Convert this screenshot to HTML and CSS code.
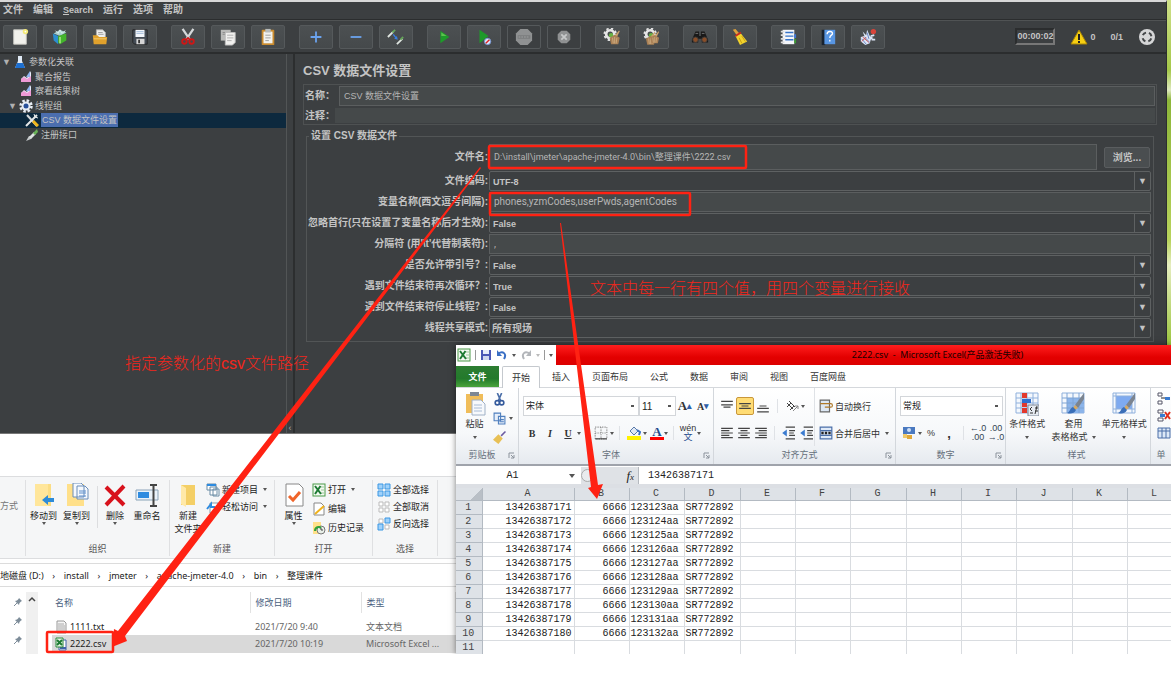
FILE: index.html
```html
<!DOCTYPE html>
<html lang="zh-CN">
<head>
    <meta charset="UTF-8">
    <meta name="viewport" content="width=device-width, initial-scale=1.0">
    <title>JMeter CSV 数据文件设置</title>
    <link rel="stylesheet" href="styles.css">
</head>
<body>
    <!-- shared symbols -->
    <svg width="0" height="0" class="symbols">
        <symbol id="chart" viewBox="0 0 14 14"><path d="M2 12V9l3-3 3 2 4-7v11z" fill="#e8eefc"/><path d="M7 7l4-6v6z" fill="#8fb3ee"/><path d="M2 12V9l3-2 3 2 4-3v6z" fill="#ef9ad6"/></symbol>
        <symbol id="left-lines" viewBox="0 0 12 12"><path d="M1 2h10M1 6h10M1 10h10M1 4h7M1 8h7" stroke="#444" stroke-width="1"/></symbol>
        <symbol id="launcher" viewBox="0 0 7 7"><path d="M1 6V1h5M3 3l3 3M6 3v3H3" stroke="#8b929b" fill="none"/></symbol>
        <symbol id="pin" viewBox="0 0 10 10"><path d="M6 1l3 3-1 .5-1.500 1.500-.5 2L2 4l2-.5L5.500 2z" fill="#7d8c99"/><path d="M4 6L1 9" stroke="#7d8c99"/></symbol>
        <symbol id="xls" viewBox="0 0 14 14"><rect x="1" y="1" width="12" height="12" fill="#f4faf2" stroke="#4b9a49"/><path d="M9 4h3M9 7h3M9 10h3" stroke="#9cc79b"/><path d="M3 3l6 8M8.500 3L3 11" stroke="#1d7a33" stroke-width="2"/></symbol>
        <symbol id="brush" viewBox="0 0 24 24"><path d="M23 1l-9 12 3 3 6-9z" fill="#7b8490"/><path d="M14 13l3 3-3 2-2-2z" fill="#d9a95e"/><path d="M12 15l3 3c-2 4-6 4-9 3 3-1 3-5 6-6z" fill="#3a6fb8"/></symbol>
        <symbol id="broom" viewBox="0 0 20 20"><path d="M10 8l6-7 1 1-4 8z" fill="#c9a26b"/><path d="M3 11l7-4 7 4-2 9H5z" fill="#a98055"/><path d="M7 11l1 8M10 10v9M13 11l-1 8" stroke="#d6b88d"/></symbol>
        <symbol id="cog" viewBox="0 0 20 20"><circle cx="8" cy="7" r="4.500" fill="none" stroke="#e6e6e6" stroke-width="3"/><circle cx="8" cy="7" r="6.500" fill="none" stroke="#e6e6e6" stroke-width="2" stroke-dasharray="2.600 2.500"/><circle cx="9" cy="8" r="2.500" fill="#69b343"/></symbol>
    </svg>

    <div class="desktop">
        <div class="jmeter">
            <nav class="menubar">
                <a href="#">文件</a>
                <a href="#">编辑</a>
                <a href="#" class="menu-search"><u>S</u>earch</a>
                <a href="#">运行</a>
                <a href="#">选项</a>
                <a href="#">帮助</a>
            </nav>

            <div class="toolbar">
                <div class="tool-group">
                    <button class="tool" aria-label="新建"><svg viewBox="0 0 20 20"><path d="M3 2h12l2 3v13H3z" fill="#f1f1ec" stroke="#c9c9c4"/><circle cx="16" cy="4" r="3" fill="#f4ea7a"/><circle cx="16" cy="4" r="1" fill="#fff"/></svg></button>
                    <button class="tool" aria-label="模板"><svg viewBox="0 0 20 20"><path d="M3 6l7-4 7 3-7 4z" fill="#a7d0cf"/><path d="M2 6l6 3v9l-5-4z" fill="#2b8fd0"/><path d="M8 9l9-3v8l-7 4-2-2z" fill="#43b42c"/><path d="M5 3l3 3 2-4 2 4 4-3" stroke="#e1f0ef" fill="none"/><path d="M10 10v7" stroke="#9be07c" stroke-width="2"/></svg></button>
                    <button class="tool" aria-label="打开"><svg viewBox="0 0 20 20"><path d="M6 2h7l3 3v8H6z" fill="#eee" stroke="#aaa"/><path d="M8 5h5M8 7h6" stroke="#999"/><path d="M2 8h5l2 2h9l-1 8H3z" fill="#e0a12c"/><path d="M3 12h14" stroke="#f6cf73"/></svg></button>
                    <button class="tool" aria-label="保存"><svg viewBox="0 0 20 20"><path d="M2 2h16v16H4l-2-2z" fill="#444c55" stroke="#222"/><path d="M5 2h10v8H5z" fill="#f2f6fb"/><path d="M6 4h8M6 6h8" stroke="#9fb9d8"/><path d="M6 12h9v6H6z" fill="#d5d5d5"/><path d="M8 13h2v4H8z" fill="#333"/></svg></button>
                </div>
                <div class="tool-group">
                    <button class="tool" aria-label="剪切"><svg viewBox="0 0 20 20"><path d="M4 1l8 12M16 1L8 13" stroke="#d5d8da" stroke-width="2.500"/><ellipse cx="6" cy="15" rx="2.500" ry="2.500" fill="none" stroke="#cf1616" stroke-width="2"/><ellipse cx="14" cy="15" rx="2.500" ry="2.500" fill="none" stroke="#cf1616" stroke-width="2"/><path d="M8 13l2-2 2 2" stroke="#cf1616" stroke-width="2" fill="none"/></svg></button>
                    <button class="tool" aria-label="复制"><svg viewBox="0 0 20 20"><path d="M2 2h11v12H2z" fill="#b9bab8"/><path d="M4 5h6M4 7h6" stroke="#888"/><path d="M7 5h11v11l-3 3H7z" fill="#f0f0ee" stroke="#bbb"/><path d="M9 8h7M9 11h7M9 14h5" stroke="#aaa"/></svg></button>
                    <button class="tool" aria-label="粘贴"><svg viewBox="0 0 20 20"><rect x="3" y="2" width="14" height="17" rx="1" fill="#c98b2e"/><path d="M5 4h10v13H5z" fill="#f2f2ee"/><path d="M7 1h6v4H7z" fill="#b7bbbb"/><path d="M7 8h6M7 11h6M7 14h4" stroke="#999"/></svg></button>
                </div>
                <div class="tool-group">
                    <button class="tool" aria-label="展开"><svg viewBox="0 0 20 20"><path d="M10 4v12M4 10h12" stroke="#6ba3ee" stroke-width="2"/></svg></button>
                    <button class="tool" aria-label="折叠"><svg viewBox="0 0 20 20"><path d="M4 10h12" stroke="#6ba3ee" stroke-width="2"/></svg></button>
                    <button class="tool" aria-label="切换"><svg viewBox="0 0 20 20"><path d="M1 10l6-6M11 18l6-6" stroke="#dfe5e0" stroke-width="2"/><path d="M6 5l3-3M15 13l3-3" stroke="#65a35a" stroke-width="2"/><path d="M7 7l3 4" stroke="#3a7ee0" stroke-width="1.500"/><path d="M12 13l-4-1 3-3z" fill="#3a7ee0"/></svg></button>
                </div>
                <div class="tool-group">
                    <button class="tool" aria-label="启动"><svg viewBox="0 0 20 20"><path d="M6 3l10 7-10 7z" fill="#1e9a2a"/><path d="M7 5l6 4-6 0z" fill="#5cc24e"/></svg></button>
                    <button class="tool" aria-label="不停顿启动"><svg viewBox="0 0 20 20"><path d="M5 2l10 7-10 8z" fill="#1e9a2a"/><circle cx="14" cy="15" r="3.500" fill="#dfe9fa" stroke="#6c8fd0"/><path d="M12 17l4-4" stroke="#d22" stroke-width="1.500"/></svg></button>
                    <button class="tool off" aria-label="停止"><svg viewBox="0 0 20 20"><path d="M6 1h8l5 5v8l-5 5H6l-5-5V6z" fill="#8f9192"/><path d="M3 8h14v4H3z" fill="#7b7d7e"/><path d="M4 10h12" stroke="#a3a5a6" stroke-dasharray="2 1"/></svg></button>
                    <button class="tool off" aria-label="关闭"><svg viewBox="0 0 20 20"><path d="M7 3h6l4 4v6l-4 4H7l-4-4V7z" fill="#8f9192"/><path d="M7 7l6 6M13 7l-6 6" stroke="#c6c8c9" stroke-width="2"/></svg></button>
                </div>
                <div class="tool-group">
                    <button class="tool" aria-label="清除"><svg viewBox="0 0 20 20"><use href="#cog"/><use href="#broom" x="5" y="1" width="16" height="18"/></svg></button>
                    <button class="tool" aria-label="清除全部"><svg viewBox="0 0 20 20"><use href="#cog"/><use href="#broom" x="1" y="3" width="15" height="16"/><use href="#broom" x="6" y="1" width="14" height="18"/></svg></button>
                </div>
                <div class="tool-group">
                    <button class="tool" aria-label="查找"><svg viewBox="0 0 20 20"><path d="M5 4h4v5h2V4h4l4 9v3h-7v-4H8v4H1v-3z" fill="#191919"/><circle cx="5" cy="13" r="3" fill="#8a4e28" stroke="#3a3a3a"/><circle cx="15" cy="13" r="3" fill="#8a4e28" stroke="#3a3a3a"/><path d="M5 6h3M12 6h3" stroke="#777"/></svg></button>
                    <button class="tool" aria-label="重置查找"><svg viewBox="0 0 20 20"><path d="M2 2l3-1 5 6-3 2z" fill="#dda13c"/><path d="M5 9l6-3 7 9-8 4z" fill="#f2d32c"/><path d="M5 9l6-4" stroke="#cc2b1d" stroke-width="2"/><path d="M9 11l3 6M12 9l4 6" stroke="#c49a12"/></svg></button>
                </div>
                <div class="tool-group">
                    <button class="tool" aria-label="函数助手"><svg viewBox="0 0 20 20"><path d="M4 2h13v16H4z" fill="#f4f6fa"/><path d="M7 5h9M7 9h9M7 13h9" stroke="#3774c9" stroke-width="1.500"/><path d="M2 4h4M2 8h4M2 12h4M2 16h4" stroke="#ddd" stroke-width="2"/><path d="M18 7v4" stroke="#3b79e0" stroke-width="2"/><path d="M18 12v5" stroke="#3a9c32" stroke-width="2"/></svg></button>
                    <button class="tool" aria-label="帮助"><svg viewBox="0 0 20 20"><path d="M3 2h4v17H3z" fill="#18222f"/><path d="M6 2h12v16H6z" fill="#5795e2"/><path d="M9 7c0-4 6-4 6-1 0 2-3 2-3 5M12 13v2" stroke="#fff" stroke-width="1.500" fill="none"/></svg></button>
                    <button class="tool" aria-label="火箭"><svg viewBox="0 0 20 20"><path d="M4 4l4 4 1-6 3 7 4 2-3 2-1 4-5 2-5-4v-5l4-1z" fill="#dbe4f5"/><path d="M3 12l5 6M6 10l6 6M9 5l2 7" stroke="#5b7cc0"/><path d="M4 10l7 6M3 15l5-5" stroke="#d0504a"/><circle cx="16" cy="4" r="3" fill="#d8443a"/><path d="M13 9l4-1M14 13h4" stroke="#dbe4f5" stroke-width="2"/></svg></button>
                </div>
                <div class="status">
                    <span class="timer">00:00:02</span>
                    <span class="warnings"><svg width="18" height="16" viewBox="0 0 18 16"><path d="M9 1l8 14H1z" fill="#f7cf12" stroke="#a98606"/><path d="M9 5v6M9 12v2" stroke="#222" stroke-width="2"/></svg>0</span>
                    <span>0/1</span>
                    <svg width="18" height="18" viewBox="0 0 18 18"><circle cx="9" cy="9" r="8" fill="#d5d6d7"/><circle cx="9" cy="9" r="4.500" fill="none" stroke="#434648" stroke-width="2" stroke-dasharray="4 3.070" stroke-dashoffset="-1.500"/></svg>
                </div>
            </div>

            <div class="jmeter-body">
                <div class="tree-pane">
                    <ul class="tree">
                        <li class="root"><span class="twisty">▼</span><svg viewBox="0 0 14 14"><path d="M5 1h4v5l3 7H2l3-7z" fill="#dfe9f5"/><path d="M4 8h6l2 5H2z" fill="#1d6fd0"/></svg><span>参数化关联</span></li>
                        <li class="leaf"><svg><use href="#chart"/></svg><span>聚合报告</span></li>
                        <li class="leaf"><svg><use href="#chart"/></svg><span>察看结果树</span></li>
                        <li class="branch"><span class="twisty">▼</span><svg viewBox="0 0 14 14"><circle cx="7" cy="7" r="5.500" fill="none" stroke="#e8edf5" stroke-width="2.500" stroke-dasharray="2.500 1.800"/><circle cx="7" cy="7" r="4.500" fill="#e8edf5"/><circle cx="7" cy="7" r="2.500" fill="#28509b"/></svg><span>线程组</span></li>
                        <li class="item selected"><svg viewBox="0 0 14 14"><path d="M2 2l10 11" stroke="#d9dcde" stroke-width="2"/><path d="M8 8l5 5" stroke="#f0b61c" stroke-width="3"/><path d="M12 2L1 13" stroke="#e6e8e9" stroke-width="2"/><path d="M9 1l1 3 3 1" stroke="#e6e8e9" fill="none"/></svg><span>CSV 数据文件设置</span></li>
                        <li class="item"><svg viewBox="0 0 14 14"><path d="M1 13l3-5 3 1-1 2z" fill="#c5c9cb"/><path d="M4 9l5-5 2 2-5 5z" fill="#dde2e0"/><path d="M8 5l4-4 1 3-3 3z" fill="#69b257"/></svg><span>注册接口</span></li>
                    </ul>
                </div>
                <div class="divider">‹</div>
                <form class="config">
                    <h1>CSV 数据文件设置</h1>
                    <div class="name-box">
                        <div class="name-row">
                            <label for="name">名称：</label>
                            <input type="text" id="name" value="CSV 数据文件设置">
                        </div>
                        <div class="comment-row">
                            <label for="comment">注释：</label>
                            <input type="text" id="comment">
                        </div>
                    </div>
                    <fieldset>
                        <legend>设置 CSV 数据文件</legend>
                        <div class="field file-field">
                            <label for="filename">文件名:</label>
                            <input type="text" id="filename" value="D:\install\jmeter\apache-jmeter-4.0\bin\整理课件\2222.csv">
                            <button type="button" class="browse">浏览...</button>
                        </div>
                        <div class="field">
                            <label for="encoding">文件编码:</label>
                            <div class="combo"><select id="encoding"><option>UTF-8</option></select></div>
                        </div>
                        <div class="field">
                            <label for="variables">变量名称(西文逗号间隔):</label>
                            <input type="text" id="variables" value="phones,yzmCodes,userPwds,agentCodes">
                        </div>
                        <div class="field">
                            <label for="ignore">忽略首行(只在设置了变量名称后才生效):</label>
                            <div class="combo"><select id="ignore"><option>False</option></select></div>
                        </div>
                        <div class="field">
                            <label for="delimiter">分隔符 (用'\t'代替制表符):</label>
                            <input type="text" id="delimiter" value=",">
                        </div>
                        <div class="field">
                            <label for="quoted">是否允许带引号？:</label>
                            <div class="combo"><select id="quoted"><option>False</option></select></div>
                        </div>
                        <div class="field">
                            <label for="recycle">遇到文件结束符再次循环？:</label>
                            <div class="combo"><select id="recycle"><option>True</option></select></div>
                        </div>
                        <div class="field">
                            <label for="stop">遇到文件结束符停止线程？:</label>
                            <div class="combo"><select id="stop"><option>False</option></select></div>
                        </div>
                        <div class="field">
                            <label for="share">线程共享模式:</label>
                            <div class="combo"><select id="share" class="cjk"><option>所有现场</option></select></div>
                        </div>
                    </fieldset>
                </form>
            </div>
        </div>

        <div class="explorer">
            <div class="ex-ribbon">
                <div class="ex-group ex-cut"><div class="ex-tools"><span>方式</span></div></div>
                <div class="ex-group ex-organize">
                    <div class="ex-tools">
                        <button class="ex-big"><svg viewBox="0 0 24 24"><path d="M3 1h16v22H3z" fill="#fbdd84"/><path d="M3 1h13v22H3z" fill="#ffe69b"/><path d="M22 15v4h-6v3l-6-5 6-5v3z" fill="#2d8bd8"/></svg>移动到<i></i></button>
                        <button class="ex-big"><svg viewBox="0 0 24 24"><path d="M2 1h17v22H2z" fill="#ffe08a"/><path d="M8 0h8l3 3v11H8zM12 3h8l3 3v10H12z" fill="#f5f9fe" stroke="#6b8db8"/><path d="M14 8h7M14 10h7M14 13h7" stroke="#5b8dcb"/></svg>复制到<i></i></button>
                        <span class="ex-sep"></span>
                        <button class="ex-big"><svg viewBox="0 0 24 24"><path d="M3 4l18 18M21 3L3 22" stroke="#d8121c" stroke-width="4"/></svg>删除<i></i></button>
                        <button class="ex-big"><svg viewBox="0 0 24 24"><path d="M1 7h22v10H1z" fill="#e9f2fa" stroke="#8aa3b8"/><path d="M3 9h11v6H3z" fill="#2d8be0"/><path d="M15 2h7M15 23h7M18.500 2v21" stroke="#444" stroke-width="2"/></svg>重命名</button>
                    </div>
                    <div class="ex-title">组织</div>
                </div>
                <div class="ex-group ex-new">
                    <div class="ex-tools">
                        <button class="ex-big"><svg viewBox="0 0 24 24"><path d="M5 2h14v20H5z" fill="#f4cf66"/><path d="M5 2l5 3v19l-5-3z" fill="#ffe9a8"/></svg>新建<br>文件夹</button>
                        <div class="ex-list">
                            <button><svg viewBox="0 0 14 14"><path d="M1 1h9v6H1zM4 4h7v8H4zM7 6h6v7H7z" fill="#fff" stroke="#6b8ca5"/><path d="M1 2h9" stroke="#2d8be0" stroke-width="2"/></svg>新建项目<i></i></button>
                            <button><svg viewBox="0 0 14 14"><path d="M4 3h8v10H4z" fill="#fff" stroke="#8a9bab"/><path d="M1 9l4-5v3h4" stroke="#2d8be0" fill="none" stroke-width="2"/></svg>轻松访问<i></i></button>
                        </div>
                    </div>
                    <div class="ex-title">新建</div>
                </div>
                <div class="ex-group ex-open">
                    <div class="ex-tools">
                        <button class="ex-big"><svg viewBox="0 0 24 24"><path d="M4 1h13l4 4v18H4z" fill="#fff" stroke="#888"/><path d="M7 13l4 4 7-8" stroke="#f0652a" stroke-width="3" fill="none"/></svg>属性<i></i></button>
                        <div class="ex-list wide">
                            <button><svg><use href="#xls"/></svg>打开<i></i></button>
                            <button><svg viewBox="0 0 14 14"><path d="M2 1h7l3 3v9H2z" fill="#fff" stroke="#888"/><path d="M3 12l9-8" stroke="#f0b21c" stroke-width="2"/></svg>编辑</button>
                            <button><svg viewBox="0 0 14 14"><path d="M1 1h8v12H1z" fill="#ffe08a"/><circle cx="9" cy="9" r="4" fill="#e8efe8" stroke="#777"/><path d="M3 10c0-4 4-5 6-3" stroke="#2fa33a" stroke-width="2" fill="none"/><path d="M9 7v2h2" stroke="#444" fill="none"/></svg>历史记录</button>
                        </div>
                    </div>
                    <div class="ex-title">打开</div>
                </div>
                <div class="ex-group ex-select">
                    <div class="ex-tools">
                        <div class="ex-list">
                            <button><svg viewBox="0 0 14 14"><path d="M1 1h5v5H1zM8 1h5v5H8zM1 8h5v5H1zM8 8h5v5H8z" fill="#9fd1fa" stroke="#3b97e3"/></svg>全部选择</button>
                            <button><svg viewBox="0 0 14 14"><path d="M2 2h4v4H2zM8 2h4v4H8zM2 8h4v4H2zM8 8h4v4H8z" fill="#fff" stroke="#bbb"/></svg>全部取消</button>
                            <button><svg viewBox="0 0 14 14"><path d="M2 2h4v4H2zM8 8h4v4H8z" fill="#fff" stroke="#bbb"/><path d="M8 1h5v5H8zM1 7h5v6H1z" fill="#9fd1fa" stroke="#3b97e3"/></svg>反向选择</button>
                        </div>
                    </div>
                    <div class="ex-title">选择</div>
                </div>
            </div>
            <nav class="address">
                <a href="#">地磁盘 (D:)</a><b>›</b><a href="#">install</a><b>›</b><a href="#">jmeter</a><b>›</b><a href="#">apache-jmeter-4.0</a><b>›</b><a href="#">bin</a><b>›</b><a href="#">整理课件</a>
            </nav>
            <div class="files">
                <div class="pins"><svg><use href="#pin"/></svg><svg><use href="#pin"/></svg><svg><use href="#pin"/></svg></div>
                <div class="scroll"><svg width="8" height="6" viewBox="0 0 8 6"><path d="M1 5l3-3 3 3" fill="none" stroke="#444" stroke-width="1.500"/></svg></div>
                <table class="file-table">
                    <thead>
                        <tr><th class="c-name">名称</th><th class="c-date">修改日期</th><th class="c-type">类型</th></tr>
                    </thead>
                    <tbody>
                        <tr><td><span class="file"><svg viewBox="0 0 12 14"><path d="M2 1h7l2 2v10H2z" fill="#f5f5f5" stroke="#999"/><path d="M3 4h6M3 6h7M3 8h7M3 10h7" stroke="#aaa"/></svg>1111.txt</span></td><td>2021/7/20 9:40</td><td>文本文档</td></tr>
                        <tr class="picked"><td><span class="file"><svg viewBox="0 0 12 14"><path d="M4 3h7v10H4z" fill="#fff" stroke="#3e63a8"/><path d="M5 11h6" stroke="#3e63a8" stroke-width="2"/><path d="M1 1h7v9H1z" fill="#e8f6e6" stroke="#2b8a3b"/><path d="M2 3l5 5M7 3L2 8" stroke="#1d7a33" stroke-width="2"/></svg>2222.csv</span></td><td>2021/7/20 10:19</td><td>Microsoft Excel ...</td></tr>
                    </tbody>
                </table>
            </div>
        </div>

        <div class="excel">
            <div class="xl-titlebar">
                <div class="quick">
                    <svg width="14" height="14"><use href="#xls"/></svg>
                    <span class="xl-bar"></span>
                    <svg width="12" height="12" viewBox="0 0 12 12"><path d="M1 1h10v10H1z" fill="#4a57b5"/><path d="M3 1h6v4H3z" fill="#e6ebf9"/><path d="M3 7h6v4H3z" fill="#cfd6ee"/></svg>
                    <svg width="12" height="12" viewBox="0 0 12 12"><path d="M2 5c5-4 9 0 6 5" fill="none" stroke="#3a6fc4" stroke-width="2"/><path d="M1 1v6h5z" fill="#3a6fc4"/></svg>
                    <i></i>
                    <svg width="12" height="12" viewBox="0 0 12 12"><path d="M10 5C5 1 1 5 4 10" fill="none" stroke="#b3b6ba" stroke-width="2"/><path d="M11 1v6H6z" fill="#b3b6ba"/></svg>
                    <i class="dim"></i>
                    <span class="xl-bar"></span>
                    <i></i>
                </div>
                <div class="xl-title">2222.csv&nbsp; -&nbsp; Microsoft Excel(产品激活失败)</div>
            </div>
            <div class="xl-tabs">
                <button class="file-tab">文件</button>
                <button class="active">开始</button>
                <button>插入</button>
                <button>页面布局</button>
                <button>公式</button>
                <button>数据</button>
                <button>审阅</button>
                <button>视图</button>
                <button>百度网盘</button>
            </div>
            <div class="xl-ribbon">
                <div class="xl-group g-clip">
                    <div class="xl-tools">
                        <button class="xl-big"><svg viewBox="0 0 24 24"><path d="M3 2h17v19H3z" fill="#f0bd5a"/><path d="M7 0h9v4H7z" fill="#7d8794"/><path d="M9 8h9l4 4v11H9z" fill="#f7f9fc" stroke="#9fb0c6"/><path d="M11 13h8M11 16h8M11 19h8" stroke="#a9bcd6"/></svg>粘贴<i></i></button>
                        <div class="clip-side">
                            <button aria-label="剪切"><svg viewBox="0 0 12 12"><path d="M4 0l3 7M8 0L5 7" stroke="#4a6ea8" stroke-width="1.500"/><circle cx="4" cy="9" r="2" fill="none" stroke="#345a9c" stroke-width="1.500"/><circle cx="8" cy="9" r="2" fill="none" stroke="#345a9c" stroke-width="1.500"/></svg></button>
                            <button aria-label="复制"><svg viewBox="0 0 12 12"><path d="M1 1h6v7H1zM5 4h6v7H5z" fill="#e7effa" stroke="#4f7fbe"/><path d="M6 7h4M6 9h4" stroke="#4f7fbe"/></svg><i></i></button>
                            <button aria-label="格式刷"><svg viewBox="0 0 12 12"><path d="M7 4l4-4 1 1-4 4z" fill="#6b5aa0"/><path d="M5 3l4 4-4 5-5-4z" fill="#e8c055"/></svg></button>
                        </div>
                    </div>
                    <div class="xl-name"><span>剪贴板</span><svg><use href="#launcher"/></svg></div>
                </div>
                <div class="xl-group g-font">
                    <div class="xl-tools rows">
                        <div class="xl-row">
                            <select class="pick font-pick" aria-label="字体"><option>宋体</option></select>
                            <select class="pick size-pick" aria-label="字号"><option>11</option></select>
                            <button class="serif grow">A<sup>▴</sup></button>
                            <button class="serif shrink">A<sup>▾</sup></button>
                        </div>
                        <div class="xl-row second">
                            <button class="serif">B</button>
                            <button class="serif"><em>I</em></button>
                            <button class="serif"><u>U</u></button>
                            <i></i>
                            <span class="xl-line"></span>
                            <button aria-label="边框"><svg viewBox="0 0 12 12"><path d="M1 1h10v10H1zM6 1v10M1 6h10" stroke="#888" stroke-dasharray="1 1" fill="none"/><path d="M1 11h10" stroke="#444"/></svg></button>
                            <i></i>
                            <span class="xl-line"></span>
                            <button aria-label="填充颜色"><svg viewBox="0 0 14 14"><path d="M3 5l4-4 4 4-4 4z" fill="#dfe8f5" stroke="#5879a8"/><path d="M10 4l3 2-1 3" fill="none" stroke="#3a6fc4" stroke-width="2"/><path d="M0 10h14v4H0z" fill="#fff200"/></svg></button>
                            <i></i>
                            <button class="font-color serif">A</button>
                            <i></i>
                            <span class="xl-line"></span>
                            <button class="pinyin"><small>wén</small>文</button>
                            <i></i>
                        </div>
                    </div>
                    <div class="xl-name"><span>字体</span><svg><use href="#launcher"/></svg></div>
                </div>
                <div class="xl-group g-align">
                    <div class="xl-tools">
                        <div class="rows align-left">
                            <div class="xl-row">
                                <button aria-label="顶端对齐"><svg viewBox="0 0 12 12"><path d="M1 2h10M1 5h10M3 7h6" stroke="#444"/></svg></button>
                                <button class="on" aria-label="垂直居中"><svg viewBox="0 0 12 12"><path d="M1 4h10M3 6h6M1 8h10" stroke="#444"/></svg></button>
                                <button aria-label="底端对齐"><svg viewBox="0 0 12 12"><path d="M3 6h6M1 8h10M1 11h10" stroke="#444"/></svg></button>
                                <span class="xl-line"></span>
                                <button aria-label="方向"><svg viewBox="0 0 14 14"><path d="M2 4l6 6M4 2l6 6M2 8l4-4M5 11l4-4" stroke="#444"/><path d="M8 12l5-5M13 7v3M13 7h-3" stroke="#888"/></svg></button>
                                <i></i>
                            </div>
                            <div class="xl-row second">
                                <button aria-label="左对齐"><svg><use href="#left-lines"/></svg></button>
                                <button aria-label="居中"><svg viewBox="0 0 12 12"><path d="M1 2h10M1 6h10M1 10h10M3 4h6M3 8h6" stroke="#444"/></svg></button>
                                <button aria-label="右对齐"><svg viewBox="0 0 12 12"><path d="M1 2h10M1 6h10M1 10h10M4 4h7M4 8h7" stroke="#444"/></svg></button>
                                <span class="xl-line"></span>
                                <button aria-label="减少缩进"><svg viewBox="0 0 12 12"><path d="M4 1h8M7 4h5M7 6h4M7 8h5M4 11h8" stroke="#444"/><path d="M5 3v6L1 6z" fill="#3a7bd0"/></svg></button>
                                <button aria-label="增加缩进"><svg viewBox="0 0 12 12"><path d="M4 1h8M7 4h5M7 6h4M7 8h5M4 11h8" stroke="#444"/><path d="M5 3v6L1 6z" fill="#3a7bd0"/></svg></button>
                            </div>
                        </div>
                        <div class="rows align-right">
                            <div class="xl-row"><button class="text"><svg viewBox="0 0 12 12"><path d="M1 1h8v10H1z" fill="#dde8f5" stroke="#666"/><path d="M1 4h9c2 0 2 3 0 3H5" fill="none" stroke="#b07a2a"/></svg>自动换行</button></div>
                            <div class="xl-row second"><button class="text"><svg viewBox="0 0 12 12"><path d="M1 1h10v10H1z" fill="#dfeaf8" stroke="#4a6ea8"/><path d="M1 4h10M1 8h10" stroke="#4a6ea8"/><path d="M2 6h2M8 6h2M5 6h2" stroke="#222" stroke-width="2"/></svg>合并后居中</button><i></i></div>
                        </div>
                    </div>
                    <div class="xl-name"><span>对齐方式</span><svg><use href="#launcher"/></svg></div>
                </div>
                <div class="xl-group g-num">
                    <div class="xl-tools rows">
                        <div class="xl-row"><select class="pick num-pick" aria-label="数字格式"><option>常规</option></select></div>
                        <div class="xl-row second">
                            <button aria-label="货币"><svg viewBox="0 0 14 14"><path d="M1 1h12v7H1z" fill="#4a79c0"/><circle cx="7" cy="4" r="2" fill="#cfe0f5"/><path d="M5 9h5v4H5z" fill="#e0a83a"/><path d="M1 8h4v4H1z" fill="#f0c96a"/></svg></button>
                            <i></i>
                            <button>%</button>
                            <button class="comma">,</button>
                            <span class="xl-line"></span>
                            <button class="dec">←.0<br>.00</button>
                            <button class="dec">.00<br>→.0</button>
                        </div>
                    </div>
                    <div class="xl-name"><span>数字</span><svg><use href="#launcher"/></svg></div>
                </div>
                <div class="xl-group g-style">
                    <div class="xl-tools">
                        <button class="xl-big"><svg viewBox="0 0 24 24"><path d="M1 1h22v20H1zM1 6h22M1 11h22M1 16h22M6 1v20M12 1v20M18 1v20" fill="#f4f8fd" stroke="#8fb0dc"/><path d="M7 1h5v5H7zM7 16h5v5H7z" fill="#e2382c"/><path d="M7 7h9v4H7z" fill="#2f6fcf"/><path d="M7 11h5v4H7z" fill="#e2382c"/><path d="M13 13h11v11H13z" fill="#e6ebf2" stroke="#7c8796"/><path d="M17 15l-2 2 2 2M15 21h3M20 16h3M20 19h3M22 14l-2 8" stroke="#333" fill="none"/></svg>条件格式<i></i></button>
                        <button class="xl-big two-line"><svg viewBox="0 0 24 24"><path d="M1 1h22v20H1z" fill="#f4f8fd" stroke="#8fb0dc"/><path d="M6 6h17v15H6z" fill="#8bb4ea"/><path d="M1 6h22M1 11h22M1 16h22M6 1v20M12 1v20M18 1v20" stroke="#7fa4d4"/><use href="#brush"/></svg>套用<br><span>表格格式<i></i></span></button>
                        <button class="xl-big"><svg viewBox="0 0 24 24"><path d="M1 1h22v20H1z" fill="#f4f8fd" stroke="#8fb0dc"/><path d="M4 4h16v13H4z" fill="#7eaaf0"/><path d="M4 1v20M20 1v20M1 4h22M1 17h22" stroke="#8fb0dc"/><use href="#brush"/></svg>单元格样式<i></i></button>
                    </div>
                    <div class="xl-name"><span>样式</span></div>
                </div>
                <div class="xl-group g-cells">
                    <div class="xl-tools cell-icons">
                        <svg viewBox="0 0 14 14"><path d="M1 1h4v3H1zM1 9h4v3H1z" fill="#fff" stroke="#556"/><path d="M8 5h5v3H8z" fill="#3a7bd0"/><path d="M4 6h4" stroke="#222"/></svg>
                        <svg viewBox="0 0 14 14"><path d="M1 1h5v3H1zM1 9h5v3H1z" fill="#fff" stroke="#556"/><path d="M3 5h5v3H3z" fill="#3a7bd0"/><path d="M8 3l5 7M13 3l-5 7" stroke="#e0301e" stroke-width="2"/></svg>
                        <svg viewBox="0 0 14 14"><path d="M1 2h12v10H1z" fill="#dce8f7" stroke="#4a6ea8"/><path d="M5 2v10M9 2v10M1 5h12" stroke="#4a6ea8"/></svg>
                    </div>
                    <div class="xl-name"><span>单</span></div>
                </div>
            </div>
            <div class="formula">
                <input type="text" class="name-input" aria-label="名称框" value="A1">
                <i></i>
                <div class="fx"><span class="ball"></span><em>f<small>x</small></em></div>
                <input type="text" class="formula-input" aria-label="编辑栏" value="13426387171">
            </div>
            <table class="sheet">
                <colgroup><col class="c26"><col class="c92"><col><col><col class="c56"><col><col><col class="c56"><col><col><col class="c56"><col><col></colgroup>
                <thead>
                    <tr><th class="corner"></th><th>A</th><th>B</th><th>C</th><th>D</th><th>E</th><th>F</th><th>G</th><th>H</th><th>I</th><th>J</th><th>K</th><th>L</th></tr>
                </thead>
                <tbody>
                    <tr><th>1</th><td class="n">13426387171</td><td class="n">6666</td><td>123123aa</td><td>SR772892</td><td></td><td></td><td></td><td></td><td></td><td></td><td></td><td></td></tr>
                    <tr><th>2</th><td class="n">13426387172</td><td class="n">6666</td><td>123124aa</td><td>SR772892</td><td></td><td></td><td></td><td></td><td></td><td></td><td></td><td></td></tr>
                    <tr><th>3</th><td class="n">13426387173</td><td class="n">6666</td><td>123125aa</td><td>SR772892</td><td></td><td></td><td></td><td></td><td></td><td></td><td></td><td></td></tr>
                    <tr><th>4</th><td class="n">13426387174</td><td class="n">6666</td><td>123126aa</td><td>SR772892</td><td></td><td></td><td></td><td></td><td></td><td></td><td></td><td></td></tr>
                    <tr><th>5</th><td class="n">13426387175</td><td class="n">6666</td><td>123127aa</td><td>SR772892</td><td></td><td></td><td></td><td></td><td></td><td></td><td></td><td></td></tr>
                    <tr><th>6</th><td class="n">13426387176</td><td class="n">6666</td><td>123128aa</td><td>SR772892</td><td></td><td></td><td></td><td></td><td></td><td></td><td></td><td></td></tr>
                    <tr><th>7</th><td class="n">13426387177</td><td class="n">6666</td><td>123129aa</td><td>SR772892</td><td></td><td></td><td></td><td></td><td></td><td></td><td></td><td></td></tr>
                    <tr><th>8</th><td class="n">13426387178</td><td class="n">6666</td><td>123130aa</td><td>SR772892</td><td></td><td></td><td></td><td></td><td></td><td></td><td></td><td></td></tr>
                    <tr><th>9</th><td class="n">13426387179</td><td class="n">6666</td><td>123131aa</td><td>SR772892</td><td></td><td></td><td></td><td></td><td></td><td></td><td></td><td></td></tr>
                    <tr><th>10</th><td class="n">13426387180</td><td class="n">6666</td><td>123132aa</td><td>SR772892</td><td></td><td></td><td></td><td></td><td></td><td></td><td></td><td></td></tr>
                    <tr><th>11</th><td></td><td></td><td></td><td></td><td></td><td></td><td></td><td></td><td></td><td></td><td></td><td></td></tr>
                </tbody>
            </table>
        </div>

        <!-- red marks over the windows -->
        <svg class="marks" width="1171" height="654" viewBox="0 0 1171 654">
            <g fill="none" stroke="#ff2213" stroke-width="2.500">
                <rect x="489" y="146" width="257" height="22" rx="1"/>
                <rect x="490" y="193" width="200" height="22" rx="1"/>
                <rect x="47" y="632" width="66" height="20" rx="1"/>
            </g>
            <path d="M480 167l1 1L125 636l2 5-15 6 2-18 4 2z" fill="#ff2213"/>
            <path d="M560 223h1l37 262 5-1-6 15-9-11 3-1z" fill="#ff2213"/>
        </svg>
        <p class="note note-path">指定参数化的csv文件路径</p>
        <p class="note note-vars">文本中每一行有四个值，用四个变量进行接收</p>
    </div>
</body>
</html>
```
FILE: styles.css
```css
* {
    box-sizing: border-box;
}

body {
    margin: 0;
    background: #fff;
    font-family: "Liberation Sans", "Noto Sans CJK SC", sans-serif;
    font-size: 9px;
}

button, input, select {
    margin: 0;
    padding: 0;
    border: 0;
    background: none;
    border-radius: 0;
    font: inherit;
    color: inherit;
}

select {
    appearance: none;
}

a {
    color: inherit;
    text-decoration: none;
}

.symbols {
    position: absolute;
}

.desktop {
    position: relative;
    height: calc(100vh - 19px);
    margin-right: 2px;
    overflow: hidden;
    background: linear-gradient(#cfe08a, #a5c84a 70px, #dfe9c0 90px, #8db63a 100px, #b8d35c 240px, #e6edc0 265px, #9cc53e 345px);
}

/* small drop-down arrow */
i {
    flex: none;
    width: 0;
    border: 2px solid transparent;
    border-top: 3px solid #555;
    border-bottom: 0;
}

i.dim {
    border-top-color: #bbb;
}

/* ---------- JMeter ---------- */
.jmeter {
    display: flex;
    flex-direction: column;
    height: 434px;
    margin-right: 4px;
    border-top: 2px solid #d8d8d8;
    border-right: 1px solid #2c2e2f;
    border-bottom: 1px solid #777;
    background: #3c3f41;
    color: #c4c4c4;
}

.menubar {
    display: flex;
    gap: 10px;
    height: 18px;
    padding-left: 3px;
    border-bottom: 1px solid #2b2d2e;
    font-size: 10px;
    font-weight: bold;
    line-height: 16px;
}

.menu-search {
    font-size: 9px;
}

.toolbar {
    display: flex;
    align-items: center;
    gap: 14px;
    height: 34px;
    padding: 0 10px 0 3px;
    border-top: 1px solid #505354;
    border-bottom: 2px solid #2b2d2e;
}

.tool-group {
    display: flex;
    gap: 6px;
}

.tool {
    display: flex;
    align-items: center;
    justify-content: center;
    width: 34px;
    height: 24px;
    border: 1px solid #55595b;
    border-radius: 2px;
    background: linear-gradient(#4c5052, #45494b);
}

.tool.off {
    background: #3c3f41;
}

.tool svg {
    width: 18px;
    height: 18px;
}

.status {
    display: flex;
    align-items: center;
    gap: 15px;
    margin-left: auto;
    font-weight: bold;
}

.timer {
    border: 2px solid #2b2d2e;
    border-right-color: #777;
    border-bottom-color: #777;
    line-height: 13px;
}

.warnings {
    display: flex;
    align-items: center;
    gap: 2px;
}

.jmeter-body {
    display: flex;
    flex: 1;
}

.tree-pane {
    flex: 0 0 286px;
}

.tree {
    display: grid;
    grid-template-rows: repeat(6, 1fr);
    height: 87px;
    margin: 1px 0 0;
    padding: 0;
    list-style: none;
}

.tree li {
    display: flex;
    align-items: center;
    gap: 2px;
    padding-left: 19px;
    line-height: 14px;
}

.tree svg {
    width: 14px;
    height: 14px;
}

.tree .root {
    padding-left: 2px;
}

.tree .branch {
    padding-left: 8px;
}

.tree .item {
    padding-left: 25px;
}

.tree .selected {
    background: #0d293e;
}

.tree .selected span {
    padding: 0 1px;
    background: #4b6eaf;
}

.twisty {
    width: 9px;
    color: #b0b0b0;
}

.divider {
    display: flex;
    align-items: flex-end;
    justify-content: center;
    flex: 0 0 9px;
    border-left: 1px solid #525556;
    border-right: 2px solid #2c2e2f;
    line-height: 10px;
    color: #aaa;
}

.config {
    flex: 1;
    min-width: 0;
    padding: 8px 9px 0 8px;
    font-size: 10px;
    font-weight: bold;
}

.config h1 {
    margin: 0 0 5px;
    font-size: 13px;
    line-height: 17px;
}

.name-box {
    padding: 1px;
    border: 1px solid #4e5152;
}

.name-row, .comment-row {
    display: flex;
    height: 20px;
    line-height: 20px;
}

.name-row {
    margin-bottom: 2px;
}

.name-row label {
    width: 34px;
}

.comment-row {
    height: 15px;
    line-height: 15px;
}

.config input {
    flex: 1;
    min-width: 0;
    padding: 0 4px;
    border: 1px solid #5b5e5f;
    background: #45494a;
    color: #b5b5b5;
    font-weight: normal;
}

.config .name-row input {
    font-size: 9px;
}

.config .comment-row input {
    border: 0;
}

.config fieldset {
    margin: 4px 3px 0;
    padding: 1px 2px 3px 1px;
    border: 1px solid #525556;
}

.config legend {
    margin-left: 1px;
    padding: 0 2px;
    line-height: 14px;
}

.field {
    display: flex;
    height: 20px;
    margin-top: 1px;
    line-height: 20px;
}

.field label {
    flex: 0 0 181px;
    padding-right: 1px;
    text-align: right;
    white-space: nowrap;
}

.field input {
    font-family: Roboto, "Noto Sans CJK SC", sans-serif;
}

.file-field {
    height: 26px;
    margin-top: 0;
    line-height: 26px;
}

.file-field input {
    font-size: 9px;
}

.browse {
    width: 46px;
    margin: 3px 1px 2px 7px;
    border: 1px solid #5a5d5f;
    border-radius: 2px;
    background: #4a4e50;
    font-weight: bold;
    line-height: 16px;
}

.combo {
    display: flex;
    flex: 1;
    border: 1px solid #5e6162;
    border-radius: 2px;
    font-size: 9px;
}

.combo select {
    flex: 1;
    padding: 0 0 4px 3px;
}

.combo .cjk {
    padding: 0 0 2px 2px;
    font-size: 10px;
}

.combo::after {
    content: "▼";
    width: 15px;
    border-left: 1px solid #5e6162;
    line-height: 18px;
    text-align: center;
}

/* ---------- Explorer ---------- */
.explorer {
    position: absolute;
    top: 434px;
    bottom: 0;
    left: 0;
    width: 456px;
    padding-top: 42px;
    overflow: hidden;
    background: #fff;
    font-family: "Noto Sans", "Noto Sans CJK SC", sans-serif;
    color: #222;
}

.ex-ribbon {
    display: flex;
    height: 83px;
    border: 1px solid #dcdddf;
    border-width: 1px 0;
    background: #f5f6f7;
}

.ex-group {
    display: flex;
    flex-direction: column;
    justify-content: space-between;
    margin: 3px 0 2px;
    border-right: 1px solid #dfe0e2;
}

.ex-cut {
    width: 26px;
    padding-top: 20px;
    line-height: 12px;
    color: #777;
}

.ex-organize {
    width: 144px;
}

.ex-new {
    width: 105px;
}

.ex-open {
    width: 98px;
}

.ex-select {
    width: 65px;
}

.ex-tools {
    display: flex;
}

.ex-title {
    color: #555;
    line-height: 14px;
    text-align: center;
}

.ex-big {
    display: flex;
    flex-direction: column;
    align-items: center;
    width: 33px;
    padding-top: 3px;
    line-height: 13px;
    white-space: nowrap;
}

.ex-organize .ex-big:first-child {
    margin-left: 1px;
}

.ex-organize .ex-big:nth-child(n+4) {
    width: 32px;
}

.ex-big svg {
    width: 24px;
    height: 24px;
    margin-bottom: 2px;
}

.ex-sep {
    width: 1px;
    height: 42px;
    margin: 6px 1px 0 4px;
    background: #dcdddf;
}

.ex-new .ex-big {
    width: 36px;
}

.ex-open .ex-big {
    width: 37px;
}

.ex-list {
    display: flex;
    flex-direction: column;
    padding-top: 1px;
}

.ex-list.wide {
    gap: 2px;
}

.ex-list button {
    display: flex;
    align-items: center;
    gap: 2px;
    height: 17px;
    white-space: nowrap;
}

.ex-list button i {
    margin-left: 3px;
}

.ex-list svg {
    width: 14px;
    height: 14px;
}

.ex-select .ex-list {
    padding-left: 4px;
}

.address {
    display: flex;
    align-items: center;
    height: 24px;
    margin-top: 4px;
    border: 1px solid #dcdcdc;
    border-width: 1px 0;
    white-space: nowrap;
}

.address b {
    width: 20px;
    font-weight: normal;
    text-align: center;
}

.files {
    display: flex;
    padding-top: 5px;
}

.pins {
    display: flex;
    flex-direction: column;
    gap: 9px;
    width: 26px;
    padding: 5px 0 0 13px;
}

.pins svg {
    width: 10px;
    height: 10px;
}

.scroll {
    width: 12px;
    height: 64px;
    padding: 4px 0 0 2px;
    background: #f0f0f0;
}

.scroll svg {
    display: block;
}

.file-table {
    flex: 1;
    align-self: flex-start;
    margin-left: 14px;
    border-collapse: collapse;
    table-layout: fixed;
    line-height: 14px;
    color: #666;
}

.file-table th {
    height: 21px;
    padding: 0 0 0 5px;
    border-right: 1px solid #e2e2e2;
    color: #4a5f80;
    font-weight: normal;
    text-align: left;
}

.file-table .c-name {
    width: 198px;
    padding-left: 3px;
}

.file-table .c-date {
    width: 111px;
}

.file-table td {
    height: 18px;
    padding: 0 0 0 5px;
    white-space: nowrap;
}

.file-table tbody tr:first-child td {
    height: 22px;
    padding-top: 5px;
}

.file-table tbody td:first-child {
    color: #222;
}

.picked {
    background: #d9d9d9;
}

.file {
    display: flex;
    align-items: center;
    gap: 3px;
}

.file svg {
    width: 12px;
    height: 14px;
    margin-left: -2px;
}

/* ---------- Excel ---------- */
.excel {
    position: absolute;
    top: 345px;
    right: 0;
    bottom: 0;
    left: 456px;
    overflow: hidden;
    background: #fff;
    box-shadow: 0 0 6px rgba(0, 0, 0, 0.5);
    color: #333;
}

.xl-titlebar {
    display: flex;
    height: 20px;
}

.quick {
    display: flex;
    align-items: center;
    flex: 0 0 100px;
    gap: 4px;
    padding-left: 1px;
    background: #fff;
}

.xl-bar {
    width: 1px;
    height: 10px;
    background: #999;
}

.xl-title {
    flex: 1;
    padding: 0 2px 0 150px;
    background: linear-gradient(#ff1e1e, #e30000 60%, #dc0000);
    color: #200000;
    font-family: "Noto Sans", "Noto Sans CJK SC", sans-serif;
    line-height: 20px;
    text-align: center;
    white-space: nowrap;
}

.xl-tabs {
    display: flex;
    height: 23px;
    padding-top: 1px;
    border-bottom: 1px solid #d5d8dc;
}

.xl-tabs button {
    padding: 0 11px 1px;
    white-space: nowrap;
}

.xl-tabs .file-tab {
    width: 43px;
    margin-right: 3px;
    background: linear-gradient(#2d7d32, #237a2b 60%, #4aa43c);
    color: #fff;
    font-weight: bold;
}

.xl-tabs .active {
    height: 22px;
    padding: 0 9px 1px;
    border: 1px solid #c5c9ce;
    border-bottom: 0;
    border-radius: 2px 2px 0 0;
    background: #fff;
}

.xl-tabs .active + button {
    margin-left: 1px;
}

.xl-ribbon {
    display: flex;
    height: 78px;
    background: linear-gradient(#fff, #f6f8fa 60%, #e6eaef);
    border-bottom: 2px solid #9fa3ab;
}

.xl-group {
    display: flex;
    flex: none;
    flex-direction: column;
    justify-content: space-between;
    border-right: 1px solid #d3d7dc;
}

.g-clip {
    width: 63px;
}

.g-font {
    width: 195px;
}

.g-align {
    width: 182px;
}

.g-num {
    width: 110px;
}

.g-style {
    width: 145px;
}

.xl-ribbon .g-cells {
    flex: 1;
    min-width: 20px;
    border: 0;
}

.xl-tools {
    display: flex;
    height: 58px;
}

.rows {
    display: flex;
    flex-direction: column;
}

.xl-name {
    display: flex;
    align-items: center;
    height: 18px;
    padding-right: 3px;
    color: #66707c;
    line-height: 14px;
}

.xl-name span {
    flex: 1;
    text-align: center;
}

.g-cells .xl-name {
    padding: 0;
}

.xl-name svg {
    width: 7px;
    height: 7px;
}

.xl-big {
    display: flex;
    flex-direction: column;
    align-items: center;
    padding-top: 4px;
    line-height: 13px;
    white-space: nowrap;
}

.xl-big svg {
    width: 24px;
    height: 24px;
    margin-bottom: 2px;
}

.xl-big > i {
    margin-top: 5px;
}

.g-clip .xl-big {
    width: 37px;
}

.clip-side {
    display: flex;
    flex-direction: column;
    gap: 6px;
    padding-top: 5px;
}

.clip-side button {
    display: flex;
    align-items: center;
    gap: 3px;
}

.clip-side svg {
    width: 13px;
    height: 13px;
}

.xl-row {
    display: flex;
    align-items: center;
    height: 20px;
    margin-top: 8px;
}

.xl-row.second {
    height: 18px;
}

.xl-row button {
    display: flex;
    align-items: center;
    justify-content: center;
    width: 18px;
    height: 18px;
}

.xl-row svg {
    flex: none;
    width: 14px;
    height: 14px;
}

.xl-line {
    width: 1px;
    height: 14px;
    margin: 0 5px;
    background: #dfe2e6;
}

.pick {
    height: 20px;
    padding-left: 2px;
    border: 1px solid #d3d6da;
    background: linear-gradient(#555, #555) right 4px center / 3px 2px no-repeat #fff;
    color: #222;
}

.g-font .rows, .g-num .rows {
    padding-left: 4px;
}

.font-pick {
    width: 116px;
}

.size-pick {
    width: 37px;
    font-size: 10px;
}

.num-pick {
    width: 103px;
}

.serif {
    font-family: "Liberation Serif", serif;
    font-size: 10px;
    font-weight: bold;
}

.xl-row .grow {
    font-size: 13px;
}

.serif sup {
    color: #2d5fa8;
    font-size: 9px;
    line-height: 9px;
}

.font-color {
    font-size: 13px;
    color: #234a8c;
}

.xl-row .font-color {
    width: 14px;
    height: 13px;
    margin-left: 3px;
    border-bottom: 3px solid #f00;
}

.xl-row .pinyin {
    flex-direction: column;
    line-height: 9px;
    color: #234a8c;
}

.pinyin small {
    font-size: 9px;
    color: #333;
}

.align-left {
    width: 101px;
    padding-left: 4px;
    border-right: 1px solid #dfe2e6;
}

.xl-row .on {
    height: 18px;
    border: 1px solid #c9973a;
    border-radius: 2px;
    background: #ffdc74;
}

.align-right {
    padding-left: 4px;
}

.xl-row .text {
    gap: 2px;
    width: auto;
    margin-right: 5px;
    white-space: nowrap;
}

.xl-row .comma {
    font-size: 13px;
    font-weight: bold;
}

.xl-row .dec {
    line-height: 9px;
    color: #345;
}

.g-style .xl-tools {
    justify-content: space-around;
}

.two-line span {
    display: flex;
    align-items: center;
    gap: 4px;
}

.cell-icons {
    flex-direction: column;
    gap: 3px;
    padding: 4px 0 0 6px;
}

.cell-icons svg {
    width: 14px;
    height: 14px;
}

.formula {
    display: flex;
    align-items: center;
    height: 22px;
    padding-top: 1px;
    border-bottom: 4px solid #dcdfe4;
    font-family: "Liberation Mono", monospace;
    font-size: 10px;
    color: #222;
}

.name-input {
    width: 113px;
    text-align: center;
}

.formula > i {
    margin: 0 6px 0 0;
    border-width: 3px;
    border-top-width: 4px;
    border-bottom-width: 0;
}

.fx {
    display: flex;
    align-items: center;
    justify-content: space-between;
    align-self: stretch;
    width: 58px;
    padding-right: 4px;
    background: #dfe2e6;
    border-right: 1px solid #b5b9bf;
    font-family: "Liberation Serif", serif;
    font-size: 13px;
}

.fx small {
    font-size: 9px;
}

.ball {
    width: 13px;
    height: 13px;
    border: 1px solid #aaa;
    border-radius: 50%;
    background: #e9ebee;
}

.formula-input {
    flex: 1;
    padding-left: 9px;
}

.sheet {
    width: 726px;
    height: 167px;
    border-collapse: collapse;
    table-layout: fixed;
    font-family: "Liberation Mono", monospace;
    font-size: 10px;
    line-height: 12px;
    color: #222;
}

.sheet col {
    width: 55px;
}

.sheet .c26 {
    width: 26px;
}

.sheet .c92 {
    width: 92px;
}

.sheet .c56 {
    width: 56px;
}

.sheet th, .sheet td {
    padding: 0 2px 0 1px;
    border-right: 1px solid #d9dce0;
    border-bottom: 1px solid #d9dce0;
    font-weight: normal;
    white-space: nowrap;
}

.sheet th {
    border-color: #b3bac2;
    background: #dee2e7;
    color: #444;
}

.sheet .corner {
    background: linear-gradient(135deg, #dee2e7 70%, #b9bfc6 70%);
}

.sheet .n {
    text-align: right;
}

/* ---------- annotations ---------- */
.marks {
    position: absolute;
    top: 0;
    left: 0;
}

.note {
    position: absolute;
    margin: 0;
    color: #f3261b;
    font-size: 16px;
    font-weight: 300;
    line-height: 22px;
    white-space: nowrap;
}

.note-path {
    top: 353px;
    left: 125px;
}

.note-vars {
    top: 278px;
    left: 590px;
}
```
